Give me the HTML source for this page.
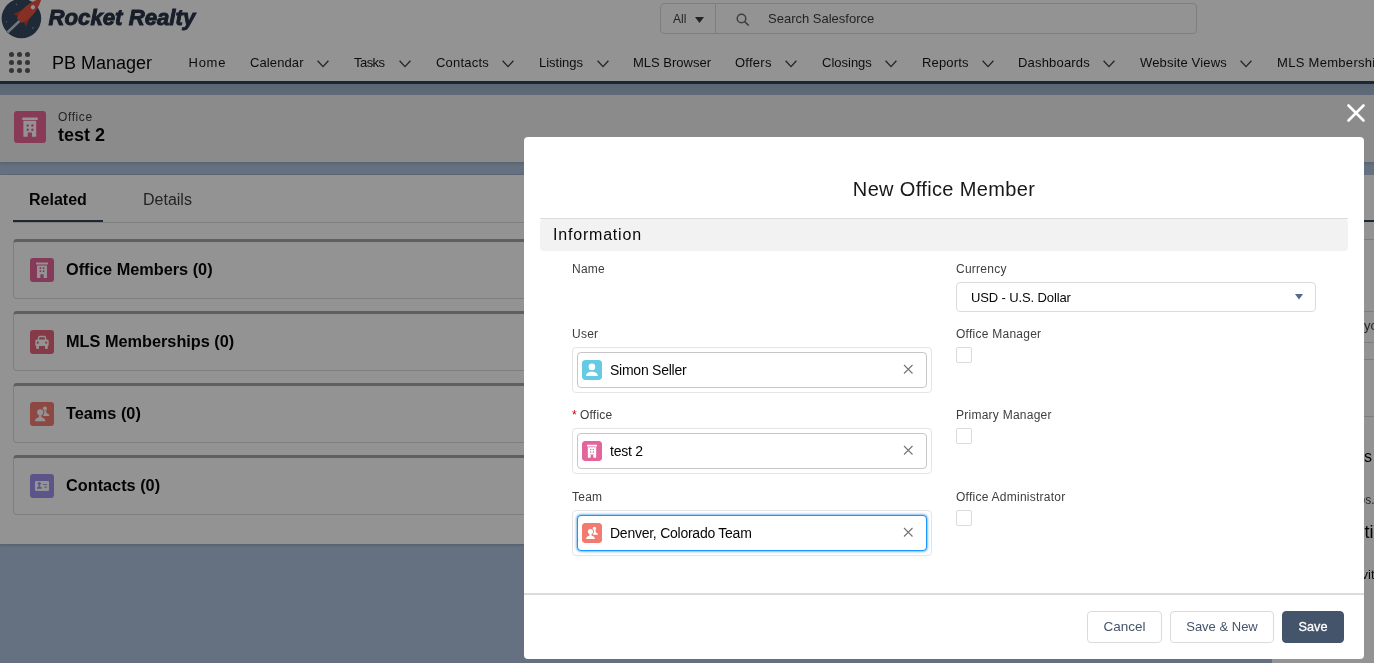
<!DOCTYPE html>
<html><head><meta charset="utf-8">
<style>
*{box-sizing:border-box;margin:0;padding:0}
html,body{width:1374px;height:663px;overflow:hidden;background:#b0c4df;}
body{will-change:transform;font-family:"Liberation Sans",sans-serif;color:#181818}
.a{position:absolute;white-space:nowrap}
.t{position:absolute;white-space:nowrap;line-height:1}
#hdr{position:absolute;left:0;top:0;width:1374px;height:84px;background:#fff;border-bottom:3px solid #32445a}
.nav{font-size:13px;color:#181818}
.chev{position:absolute;width:12px;height:8px}
#rechead{position:absolute;left:0;top:95px;width:1374px;height:67px;background:#f3f2f2;box-shadow:0 2px 3px rgba(0,0,0,0.12)}
#band1{position:absolute;left:0;top:84px;width:1374px;height:11px;background:linear-gradient(#9eb1cb,#a6b9d3)}
#main{position:absolute;left:0;top:175px;width:1260px;height:369px;background:#fff;border-radius:0 0 4px 0;box-shadow:0 2px 2px rgba(0,0,0,0.12),0 -1px 1px rgba(0,0,0,0.1)}
#side{position:absolute;left:1272px;top:175px;width:120px;height:500px;background:#fff}
.card{position:absolute;left:13px;width:1235px;height:60px;border:1px solid #dddbda;border-top:3px solid #a8a6a3;border-radius:4px;background:#fff}
.cicon{position:absolute;left:30px;width:24px;height:24px;border-radius:3px}
.ctitle{font-size:16.3px;font-weight:bold;color:#080707}
#backdrop{position:absolute;left:0;top:0;width:1374px;height:663px;background:rgba(0,0,0,0.424)}
#modal{position:absolute;left:524px;top:137px;width:840px;height:522px;background:#fff;border-radius:4px}
.lbl{font-size:12px;color:#3e3e3c;letter-spacing:0.25px}
.look{position:absolute;left:48px;width:360px;height:46px;border:1px solid #e5e5e5;border-radius:4px}
.pill{position:absolute;left:4px;top:4px;width:350px;height:36px;border:1px solid #c9c7c5;border-radius:4px;background:#fff}
.licon{position:absolute;left:4px;top:7px;width:20px;height:20px;border-radius:3px}
.lval{font-size:14px;color:#080707;letter-spacing:-0.25px}
.cb{position:absolute;left:432px;width:16px;height:16px;border:1px solid #dddbda;border-radius:2px}
.btn{position:absolute;top:474px;height:32px;border:1px solid #dddbda;border-radius:4px;background:#fff;font-size:13.5px;color:#44546a;text-align:center;line-height:30px}
</style></head><body>

<!-- HEADER -->
<div id="hdr">
  <svg class="a" style="left:0;top:-2px" width="46" height="44" viewBox="0 0 46 44">
    <circle cx="21.4" cy="20.5" r="19.8" fill="#344961"/>
    <circle cx="16.5" cy="6.4" r="0.8" fill="#8a96a6"/><circle cx="6.3" cy="23.8" r="0.7" fill="#8a96a6"/><circle cx="32.9" cy="29.9" r="0.8" fill="#8a96a6"/>
    <path d="M7.6 34.3L19.6 22.9" stroke="#c9ced6" stroke-width="2.6"/>
    <g transform="translate(19.6,22.3) rotate(-45)">
      <path d="M9.5 -5.4L0 -8.6L2.5 -3.4Z" fill="#c9432f"/>
      <path d="M9.5 5.4L0 8.6L2.5 3.4Z" fill="#c9432f"/>
      <path d="M-0.5 -3.4C5 -6.4 19 -7.2 31 0C19 7.2 5 6.4 -0.5 3.4Z" fill="#e8533f"/>
      <circle cx="18.6" cy="0.2" r="2.1" fill="#fff"/>
    </g>
  </svg>
  <div class="t" style="left:48.5px;top:6.5px;font-size:22.2px;font-weight:bold;font-style:italic;color:#283549;-webkit-text-stroke:0.9px #283549">Rocket Realty</div>

  <div class="a" style="left:660px;top:3px;width:537px;height:31px;border:1px solid #dddbda;border-radius:4px"></div>
  <div class="a" style="left:715px;top:4px;width:1px;height:29px;background:#dddbda"></div>
  <div class="t" style="left:673px;top:13px;font-size:12px;color:#3e3e3c">All</div>
  <svg class="a" style="left:695px;top:17px" width="9" height="6" viewBox="0 0 9 6"><path d="M0 0H9L4.5 6Z" fill="#3e3e3c"/></svg>
  <svg class="a" style="left:736px;top:13px" width="14" height="13" viewBox="0 0 14 13"><circle cx="5.5" cy="5.5" r="4.3" fill="none" stroke="#706e6b" stroke-width="1.5"/><path d="M8.7 8.7L12.8 12.5" stroke="#706e6b" stroke-width="1.6"/></svg>
  <div class="t" style="left:768px;top:12px;font-size:13px;color:#3e3e3c">Search Salesforce</div>

  <!-- app launcher -->
  <svg class="a" style="left:8px;top:51px" width="23" height="23" viewBox="0 0 23 23" fill="#5c5c5c">
    <circle cx="3.5" cy="3.5" r="2.5"/><circle cx="11.5" cy="3.5" r="2.5"/><circle cx="19.5" cy="3.5" r="2.5"/>
    <circle cx="3.5" cy="11.5" r="2.5"/><circle cx="11.5" cy="11.5" r="2.5"/><circle cx="19.5" cy="11.5" r="2.5"/>
    <circle cx="3.5" cy="19.5" r="2.5"/><circle cx="11.5" cy="19.5" r="2.5"/><circle cx="19.5" cy="19.5" r="2.5"/>
  </svg>
  <div class="t" style="left:52px;top:54px;font-size:18px;color:#080707">PB Manager</div>

  <div class="t nav" style="left:188.6px;top:56px;letter-spacing:0.7px">Home</div>
  <div class="t nav" style="left:250px;top:56px;letter-spacing:0.1px">Calendar</div>
  <div class="t nav" style="left:354px;top:56px;letter-spacing:-0.55px">Tasks</div>
  <div class="t nav" style="left:436px;top:56px;letter-spacing:0.2px">Contacts</div>
  <div class="t nav" style="left:539px;top:56px">Listings</div>
  <div class="t nav" style="left:633px;top:56px">MLS Browser</div>
  <div class="t nav" style="left:735px;top:56px;letter-spacing:0.25px">Offers</div>
  <div class="t nav" style="left:822px;top:56px">Closings</div>
  <div class="t nav" style="left:922px;top:56px;letter-spacing:0.15px">Reports</div>
  <div class="t nav" style="left:1018px;top:56px;letter-spacing:0.18px">Dashboards</div>
  <div class="t nav" style="left:1140px;top:56px;letter-spacing:0.16px">Website Views</div>
  <div class="t nav" style="left:1277px;top:56px;letter-spacing:0.3px">MLS Memberships</div>

  <svg class="chev" style="left:317px;top:60px" viewBox="0 0 12 8"><path d="M0.6 0.8L6 6.6L11.4 0.8" fill="none" stroke="#3e3e3c" stroke-width="1.3"/></svg>
  <svg class="chev" style="left:399px;top:60px" viewBox="0 0 12 8"><path d="M0.6 0.8L6 6.6L11.4 0.8" fill="none" stroke="#3e3e3c" stroke-width="1.3"/></svg>
  <svg class="chev" style="left:502px;top:60px" viewBox="0 0 12 8"><path d="M0.6 0.8L6 6.6L11.4 0.8" fill="none" stroke="#3e3e3c" stroke-width="1.3"/></svg>
  <svg class="chev" style="left:597px;top:60px" viewBox="0 0 12 8"><path d="M0.6 0.8L6 6.6L11.4 0.8" fill="none" stroke="#3e3e3c" stroke-width="1.3"/></svg>
  <svg class="chev" style="left:785px;top:60px" viewBox="0 0 12 8"><path d="M0.6 0.8L6 6.6L11.4 0.8" fill="none" stroke="#3e3e3c" stroke-width="1.3"/></svg>
  <svg class="chev" style="left:885px;top:60px" viewBox="0 0 12 8"><path d="M0.6 0.8L6 6.6L11.4 0.8" fill="none" stroke="#3e3e3c" stroke-width="1.3"/></svg>
  <svg class="chev" style="left:982px;top:60px" viewBox="0 0 12 8"><path d="M0.6 0.8L6 6.6L11.4 0.8" fill="none" stroke="#3e3e3c" stroke-width="1.3"/></svg>
  <svg class="chev" style="left:1103px;top:60px" viewBox="0 0 12 8"><path d="M0.6 0.8L6 6.6L11.4 0.8" fill="none" stroke="#3e3e3c" stroke-width="1.3"/></svg>
  <svg class="chev" style="left:1240px;top:60px" viewBox="0 0 12 8"><path d="M0.6 0.8L6 6.6L11.4 0.8" fill="none" stroke="#3e3e3c" stroke-width="1.3"/></svg>
</div>

<div id="band1"></div>
<!-- RECORD HEADER -->
<div id="rechead">
  <div class="a" style="left:14px;top:16px;width:32px;height:32px;border-radius:3px;background:#ec6597"></div>
  <svg class="a" style="left:14px;top:16px" width="32" height="32" viewBox="0 0 32 32">
    <rect x="8.2" y="6.4" width="15.6" height="2.6" rx="0.8" fill="#fff"/>
    <path d="M9.4 9.8H22.2V25.7H18V21.5H13.7V25.7H9.4Z" fill="#fff"/>
    <circle cx="13.7" cy="14.5" r="1.2" fill="#ec6597"/><circle cx="18.4" cy="14.5" r="1.2" fill="#ec6597"/>
    <circle cx="13.7" cy="18.7" r="1.2" fill="#ec6597"/><circle cx="18.4" cy="18.7" r="1.2" fill="#ec6597"/>
  </svg>
  <div class="t" style="left:58px;top:16px;font-size:12px;color:#3e3e3c;letter-spacing:0.6px">Office</div>
  <div class="t" style="left:58px;top:31px;font-size:18px;font-weight:bold;color:#080707">test 2</div>
</div>

<!-- MAIN RELATED -->
<div id="main">
  <div class="t" style="left:29px;top:17px;font-size:16px;font-weight:bold;color:#080707">Related</div>
  <div class="t" style="left:143px;top:17px;font-size:16px;color:#3e3e3c">Details</div>
  <div class="a" style="left:13px;top:47px;width:1235px;height:1px;background:#dddbda"></div>
  <div class="a" style="left:13px;top:45px;width:90px;height:2px;background:#32445a"></div>

  <div class="card" style="top:64px"></div>
  <div class="card" style="top:136px"></div>
  <div class="card" style="top:208px"></div>
  <div class="card" style="top:280px"></div>

  <svg class="a" style="left:30px;top:83px" width="24" height="24" viewBox="0 0 24 24">
    <rect width="24" height="24" rx="3" fill="#e9659a"/>
    <rect x="6" y="4.6" width="12" height="2" rx="0.6" fill="#fff"/>
    <path d="M7 7.4H17V20H13.6V16.2H10.4V20H7Z" fill="#fff"/>
    <circle cx="10.4" cy="10.2" r="0.9" fill="#e9659a"/><circle cx="13.6" cy="10.2" r="0.9" fill="#e9659a"/>
    <circle cx="10.4" cy="13.2" r="0.9" fill="#e9659a"/><circle cx="13.6" cy="13.2" r="0.9" fill="#e9659a"/>
  </svg>
  <div class="t ctitle" style="left:66px;top:86px">Office Members (0)</div>

  <svg class="a" style="left:30px;top:155px" width="24" height="24" viewBox="0 0 24 24">
    <rect width="24" height="24" rx="3" fill="#e9657d"/>
    <g transform="translate(0,0.7)"><path d="M8.2 6.2C8.4 5.4 8.9 5 9.7 5H14.3C15.1 5 15.6 5.4 15.8 6.2L16.6 9H17.4C18.2 9 18.7 9.6 18.7 10.4V14.2C18.7 14.8 18.3 15.2 17.8 15.3V17.3C17.8 17.8 17.4 18.2 16.9 18.2H15.9C15.4 18.2 15 17.8 15 17.3V15.3H9V17.3C9 17.8 8.6 18.2 8.1 18.2H7.1C6.6 18.2 6.2 17.8 6.2 17.3V15.3C5.7 15.2 5.3 14.8 5.3 14.2V10.4C5.3 9.6 5.8 9 6.6 9H7.4Z" fill="#fff"/>
    <path d="M8.9 8.9L9.5 6.6H14.5L15.1 8.9Z" fill="#e9657d"/>
    <circle cx="7.8" cy="12" r="1.1" fill="#e9657d"/><circle cx="16.2" cy="12" r="1.1" fill="#e9657d"/></g>
  </svg>
  <div class="t ctitle" style="left:66px;top:158px">MLS Memberships (0)</div>

  <svg class="a" style="left:30px;top:227px" width="24" height="24" viewBox="0 0 24 24">
    <rect width="24" height="24" rx="3" fill="#f77e75"/>
    <circle cx="14.9" cy="6.6" r="2.1" fill="#fff"/><path d="M13.8 8.4C14.2 9.2 14.3 10.6 13.8 11.2C13.4 11.6 13 12 13 12.6V14H19.2C19.2 12.6 18.4 12 17.2 11.6C16.4 11.2 16.2 9.8 16.2 8.4Z" fill="#fff"/><circle cx="10.2" cy="10.3" r="4.1" fill="#f77e75"/><path d="M5 19.2C5 17 6.6 16 8.4 15.4C9.2 15.1 9.2 14.2 8.9 13.2H11.5C11.2 14.2 11.2 15.1 12 15.4C13.8 16 15.4 17 15.4 19.2Z" fill="#fff"/><circle cx="10.2" cy="10.3" r="3.1" fill="#fff"/>
  </svg>
  <div class="t ctitle" style="left:66px;top:230px">Teams (0)</div>

  <svg class="a" style="left:30px;top:299px" width="24" height="24" viewBox="0 0 24 24">
    <rect width="24" height="24" rx="3" fill="#a094ed"/>
    <rect x="5" y="7" width="14" height="10" rx="1" fill="#fff"/>
    <circle cx="9.3" cy="9.6" r="1.6" fill="#a094ed"/>
    <path d="M6.9 14.8C6.9 13.4 7.8 12.7 8.7 12.6V11H9.9V12.6C10.8 12.7 11.9 13.4 11.9 14.8Z" fill="#a094ed"/>
    <rect x="13.2" y="10" width="3.7" height="0.9" fill="#a094ed"/>
    <rect x="14.3" y="12.4" width="2.6" height="1.3" rx="0.6" fill="#a094ed"/>
  </svg>
  <div class="t ctitle" style="left:66px;top:302px">Contacts (0)</div>
</div>

<div id="side">
  <div class="a" style="left:0;top:45px;width:120px;height:2px;background:#32445a"></div>
  <div class="a" style="left:0;top:64px;width:120px;height:1px;background:#dddbda"></div>
  <div class="a" style="left:0;top:136px;width:120px;height:1px;background:#dddbda"></div>
  <div class="a" style="left:0;top:167px;width:120px;height:1px;background:#dddbda"></div>
  <div class="a" style="left:0;top:184px;width:120px;height:1px;background:#dddbda"></div>
  <div class="a" style="left:0;top:241px;width:120px;height:1px;background:#dddbda"></div>
  <div class="t" style="left:92px;top:144px;font-size:13px;color:#3e3e3c">you</div>
  <div class="t" style="left:92px;top:274px;font-size:16px;color:#080707">s</div>
  <div class="t" style="left:86.6px;top:318.6px;font-size:12px;color:#3e3e3c">os.</div>
  <div class="t" style="left:92.5px;top:348.3px;font-size:18px;color:#080707">ti</div>
  <div class="t" style="left:89.5px;top:393.4px;font-size:13px;color:#181818">vit</div>
</div>

<div id="backdrop"></div>

<!-- CLOSE -->
<svg class="a" style="left:1346px;top:103px" width="20" height="20" viewBox="0 0 20 20"><path d="M2.5 2.5L17.5 17.5M17.5 2.5L2.5 17.5" stroke="#fff" stroke-width="2.6" stroke-linecap="round"/></svg>

<!-- MODAL -->
<div id="modal">
  <div class="t" style="left:0;width:840px;text-align:center;top:42px;font-size:20px;color:#181818;letter-spacing:0.35px">New Office Member</div>
  <div class="a" style="left:16px;top:81px;width:808px;height:1px;background:#dddbda"></div>
  <div class="a" style="left:16px;top:82px;width:808px;height:32px;background:#f3f2f2;border-radius:4px"></div>
  <div class="t" style="left:29px;top:90px;font-size:16px;color:#080707;letter-spacing:0.8px">Information</div>

  <div class="t lbl" style="left:48px;top:126px">Name</div>
  <div class="t lbl" style="left:48px;top:191px">User</div>
  <div class="look" style="top:210px"><div class="pill"><svg class="licon" viewBox="0 0 20 20"><rect width="20" height="20" rx="3" fill="#65cae4"/><circle cx="9.9" cy="6.9" r="3.3" fill="#fff"/><path d="M4 15.9C4 13.3 6.5 11.7 9.9 11.7C13.3 11.7 15.8 13.3 15.8 15.9Z" fill="#fff"/></svg><div class="t lval" style="left:32px;top:9.5px">Simon Seller</div><svg class="a" style="left:324.5px;top:11px" width="11" height="11" viewBox="0 0 11 11"><path d="M1 1L9.5 9.5M9.5 1L1 9.5" stroke="#747474" stroke-width="1.1"/></svg></div></div>

  <div class="t lbl" style="left:48px;top:272px"><span style="color:#ba0517;margin-right:3px">*</span>Office</div>
  <div class="look" style="top:291px"><div class="pill"><svg class="licon" viewBox="0 0 24 24"><rect width="24" height="24" rx="3" fill="#e2669b"/><rect x="6" y="4.6" width="12" height="2" rx="0.6" fill="#fff"/><path d="M7 7.4H17V20H13.6V16.2H10.4V20H7Z" fill="#fff"/><circle cx="10.4" cy="10.2" r="0.9" fill="#e2669b"/><circle cx="13.6" cy="10.2" r="0.9" fill="#e2669b"/><circle cx="10.4" cy="13.2" r="0.9" fill="#e2669b"/><circle cx="13.6" cy="13.2" r="0.9" fill="#e2669b"/></svg><div class="t lval" style="left:32px;top:9.5px">test 2</div><svg class="a" style="left:324.5px;top:11px" width="11" height="11" viewBox="0 0 11 11"><path d="M1 1L9.5 9.5M9.5 1L1 9.5" stroke="#747474" stroke-width="1.1"/></svg></div></div>

  <div class="t lbl" style="left:48px;top:354px">Team</div>
  <div class="look" style="top:373px"><div class="pill" style="border-color:#1b96ff;box-shadow:0 0 3px #0176d3"><svg class="licon" viewBox="0 0 24 24"><rect width="24" height="24" rx="3" fill="#f27a6e"/><circle cx="14.9" cy="6.6" r="2.1" fill="#fff"/><path d="M13.8 8.4C14.2 9.2 14.3 10.6 13.8 11.2C13.4 11.6 13 12 13 12.6V14H19.2C19.2 12.6 18.4 12 17.2 11.6C16.4 11.2 16.2 9.8 16.2 8.4Z" fill="#fff"/><circle cx="10.2" cy="10.3" r="4.1" fill="#f27a6e"/><path d="M5 19.2C5 17 6.6 16 8.4 15.4C9.2 15.1 9.2 14.2 8.9 13.2H11.5C11.2 14.2 11.2 15.1 12 15.4C13.8 16 15.4 17 15.4 19.2Z" fill="#fff"/><circle cx="10.2" cy="10.3" r="3.1" fill="#fff"/></svg><div class="t lval" style="left:32px;top:9.5px">Denver, Colorado Team</div><svg class="a" style="left:324.5px;top:11px" width="11" height="11" viewBox="0 0 11 11"><path d="M1 1L9.5 9.5M9.5 1L1 9.5" stroke="#747474" stroke-width="1.1"/></svg></div></div>

  <div class="t lbl" style="left:432px;top:126px">Currency</div>
  <div class="a" style="left:432px;top:145px;width:360px;height:30px;border:1px solid #dddbda;border-radius:4px"></div>
  <div class="t" style="left:447px;top:154px;font-size:13px;color:#080707;letter-spacing:-0.12px">USD - U.S. Dollar</div>
  <svg class="a" style="left:771px;top:157px" width="8" height="6" viewBox="0 0 8 6"><path d="M0 0H8L4 5.4Z" fill="#54698d"/></svg>

  <div class="t lbl" style="left:432px;top:191px">Office Manager</div>
  <div class="cb" style="top:210px"></div>
  <div class="t lbl" style="left:432px;top:272px">Primary Manager</div>
  <div class="cb" style="top:291px"></div>
  <div class="t lbl" style="left:432px;top:354px">Office Administrator</div>
  <div class="cb" style="top:373px"></div>

  <div class="a" style="left:0;top:456px;width:840px;height:2px;background:#dddbda"></div>
  <div class="btn" style="left:563px;width:75px">Cancel</div>
  <div class="btn" style="left:646px;width:104px;font-size:13px">Save &amp; New</div>
  <div class="btn" style="left:758px;width:62px;background:#44546a;border-color:#44546a;color:#fff;font-size:12.7px;-webkit-text-stroke:0.3px #fff">Save</div>
</div>
</body></html>
